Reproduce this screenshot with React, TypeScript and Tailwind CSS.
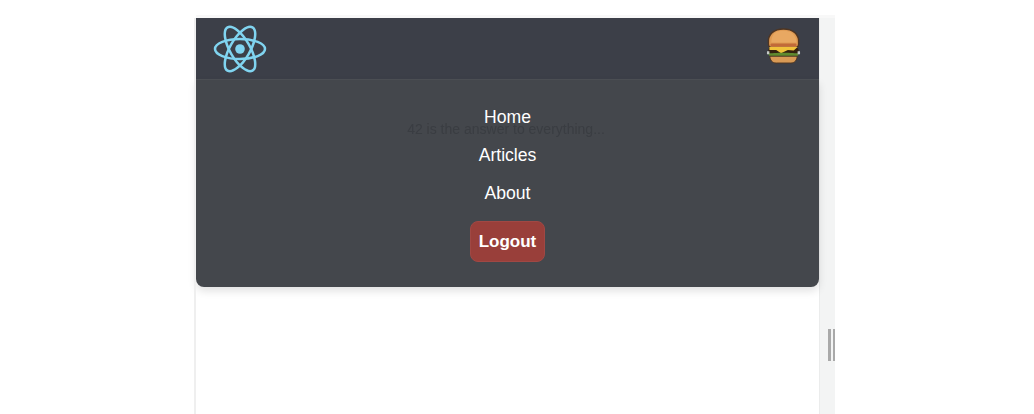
import React from 'react';

const ReactLogo = () => (
  <svg width="54" height="50" viewBox="-27 -25 54 50" fill="none" stroke="#80d4f0" strokeWidth="2.5">
    <circle r="4.8" fill="#80d4f0" stroke="none" />
    <ellipse rx="25" ry="10" />
    <ellipse rx="25" ry="10" transform="rotate(60)" />
    <ellipse rx="25" ry="10" transform="rotate(120)" />
  </svg>
);

const Burger = () => (
  <svg width="35" height="36" viewBox="0 0 35 37" className="mb-[6px]">
    {/* top bun */}
    <path d="M2 16 C1 6 8 1 17.5 1 C27 1 34 6 33 16 C33 19 32 20 30 20 L5 20 C3 20 2 19 2 16 Z" fill="#df9a52" stroke="#4e3522" strokeWidth="1.4" />
    <path d="M11 3.5 C15 2.5 22 2.5 26 5 C29 7.5 31 11 31 15 L5 15 C5 9 7 5 11 3.5 Z" fill="#e8a862" />
    <rect x="4" y="16" width="27" height="3" rx="1.5" fill="#c26a38" />
    {/* patty and cheese */}
    <rect x="2" y="20" width="31" height="6.5" rx="3" fill="#33210f" />
    <path d="M3 19.5 L32 19.5 L28 23 L22 22.5 L15 26 L10 22.5 L3 22.5 Z" fill="#f0c23a" />
    {/* lettuce */}
    <path d="M2 26.5 C6 25 29 25 33 26.5 C33 29 30 29.5 27 29.5 L8 29.5 C5 29.5 2 29 2 26.5 Z" fill="#5f8a2e" />
    <path d="M0.5 24 L3 24 L3 27 L0.5 27 Z M32 24 L34.5 24 L34.5 27 L32 27 Z" fill="#c5cbc8" />
    {/* bottom bun */}
    <path d="M3.5 29 L31.5 29 C31.5 33 29 36 25 36 L10 36 C6 36 3.5 33 3.5 29 Z" fill="#d99a55" stroke="#4e3522" strokeWidth="1" />
  </svg>
);

export default function App() {
  return (
    <div className="h-[414px] overflow-hidden bg-white flex justify-center pr-[3px] font-['Liberation_Sans',Arial,sans-serif]">
      <div className="w-[639px] h-[414px] flex flex-col">
        <div className="h-[18px] border-b-[3px] border-[#f8f8f8]" />
        <div className="flex-1 flex min-h-0">
          {/* Page area */}
          <div className="relative flex-1">
            <div className="absolute left-[-2px] top-0 bottom-0 w-[2px] bg-[#efefef]" />
            <nav>
              <header className="h-[62px] bg-[#3c3f48] border-b border-[#4d5055] flex items-center justify-between pl-[17px] pr-[18px]">
                <ReactLogo />
                <Burger />
              </header>
              <div className="bg-[#44474c] rounded-b-lg shadow-[0_4px_8px_rgba(0,0,0,0.12)] h-[207px] flex flex-col items-center pt-[18px] text-white text-[17.6px]">
                <a className="h-[38px] leading-[38px]">Home</a>
                <a className="h-[38px] leading-[38px]">Articles</a>
                <a className="h-[38px] leading-[38px]">About</a>
                <button className="mt-[9px] w-[75px] h-[41px] rounded-lg bg-[#993f3a] border border-[#a04844] font-bold text-[17px]">
                  Logout
                </button>
              </div>
            </nav>
            {/* page text showing through the open menu */}
            <p className="absolute left-0 right-[3px] top-[101px] text-center text-sm text-[#3a3d42] blur-[0.5px]">
              42 is the answer to everything...
            </p>
          </div>
          {/* Scrollbar gutter */}
          <div className="w-[16px] bg-[#f3f4f4] border-l border-[#ebecec] pt-[311px] pl-[8px]">
            <div className="flex gap-[2px]">
              <div className="w-[3px] h-[32px] bg-[#a9a9a9]" />
              <div className="w-[3px] h-[32px] bg-[#a9a9a9]" />
            </div>
          </div>
        </div>
      </div>
    </div>
  );
}
